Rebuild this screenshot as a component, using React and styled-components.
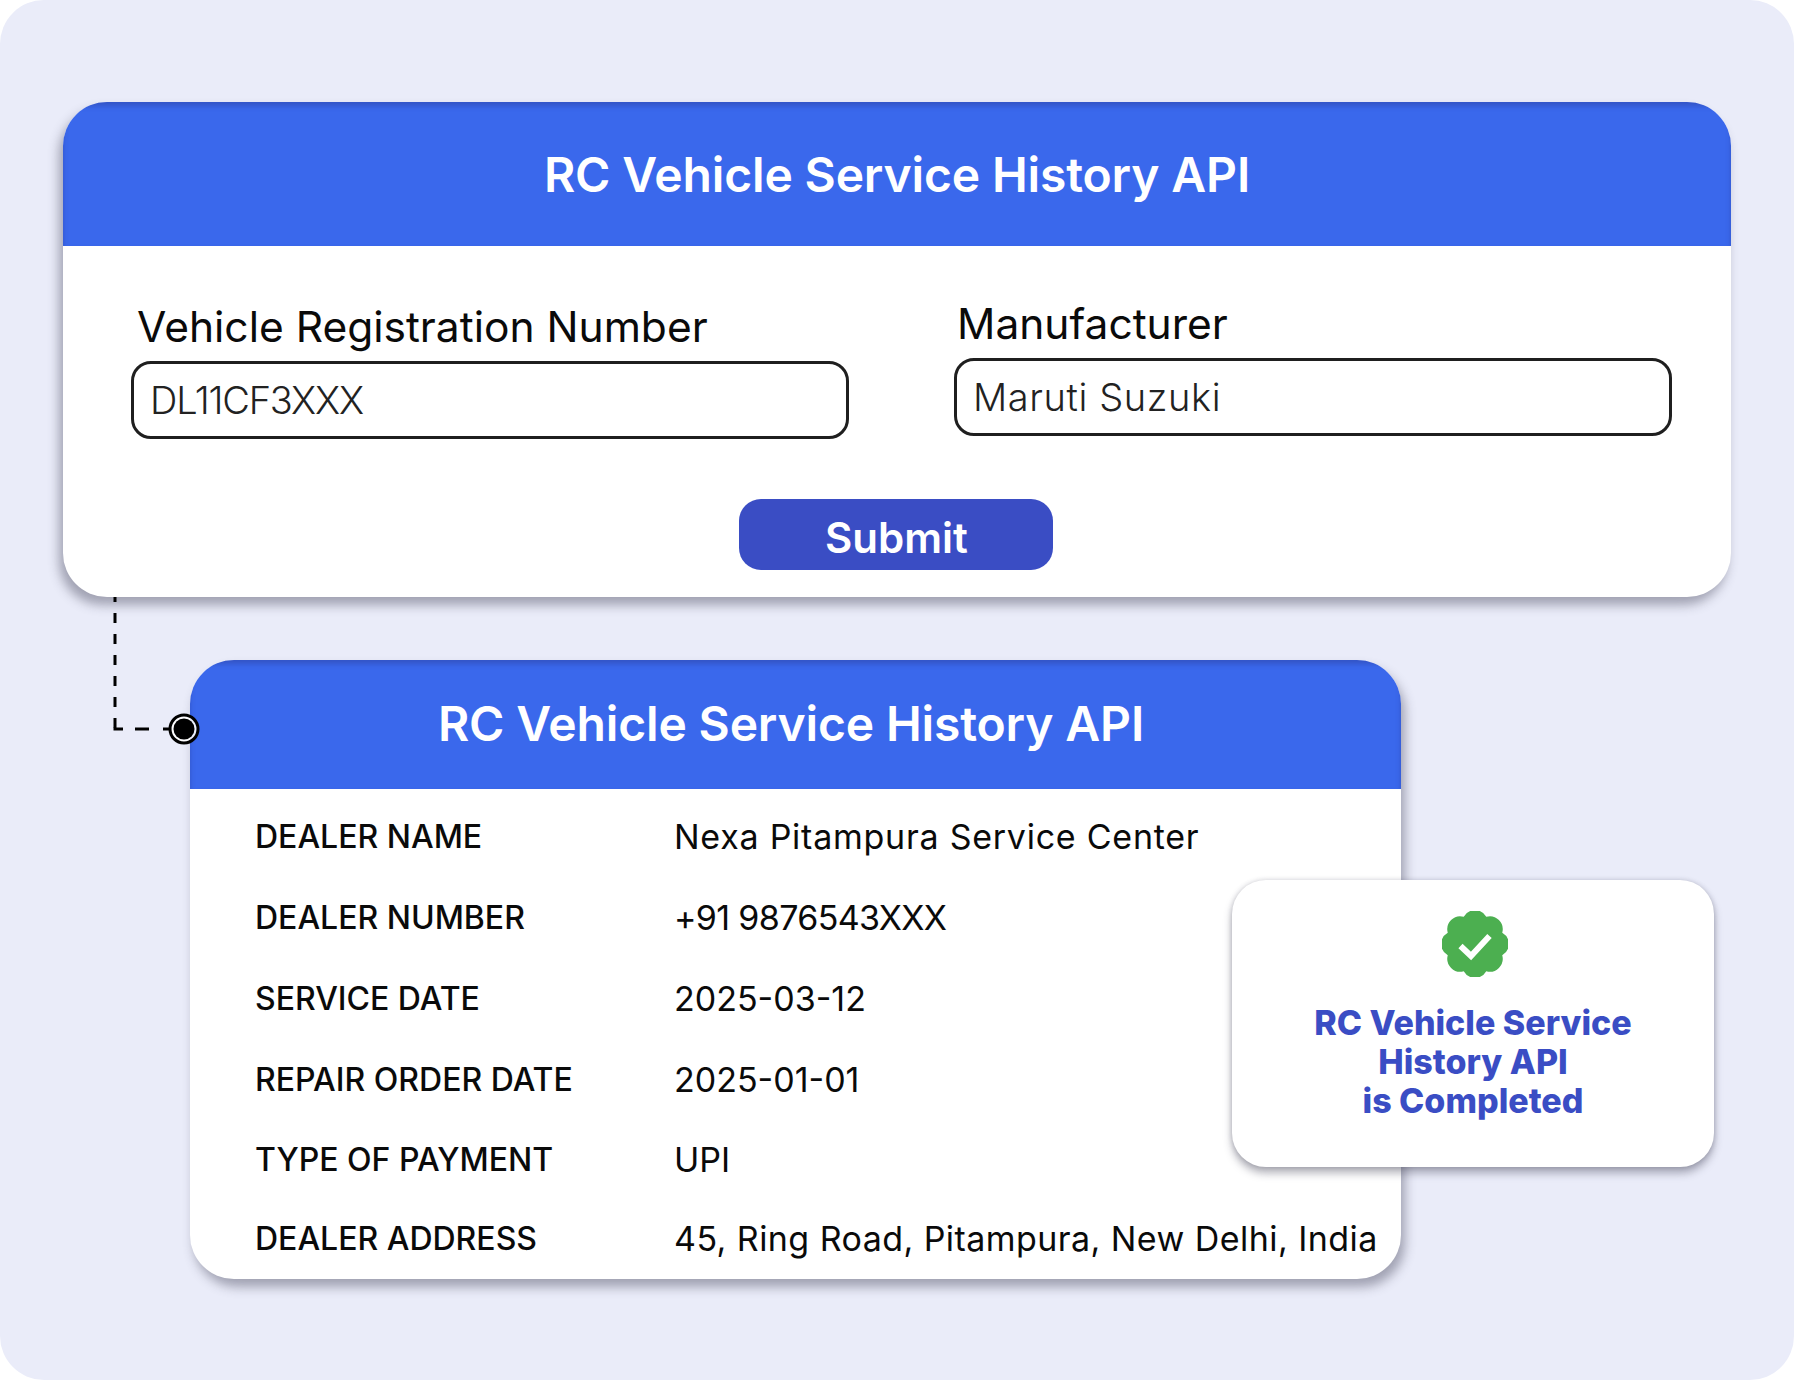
import React from 'react';
import styled, { createGlobalStyle } from 'styled-components';

const GlobalStyle = createGlobalStyle`
  html, body {
    margin: 0;
    padding: 0;
    background: #ffffff;
    font-family: Inter, "Liberation Sans", sans-serif;
  }
`;

const Page = styled.div`
  box-sizing: border-box;
  width: 1794px;
  height: 1380px;
  padding: 102px 63px 0;
  border-radius: 44px;
  background: #eaecf9;
`;

const Card = styled.section`
  border-radius: 44px;
  background: #ffffff;
  overflow: hidden;
`;

const FormCard = styled(Card)`
  height: 495px;
  box-shadow: -4px 8px 11px rgba(60, 60, 80, 0.42);
`;

const Header = styled.header`
  display: flex;
  align-items: center;
  justify-content: center;
  height: ${(p) => p.$height}px;
  padding-bottom: ${(p) => p.$nudge}px;
  padding-right: ${(p) => p.$shift}px;
  box-sizing: border-box;
  background: #3a68ec;
  box-shadow: inset 0 4px 5px rgba(40, 50, 130, 0.35);
  color: #ffffff;
  font-size: 48px;
  font-weight: 600;
  letter-spacing: -0.15px;
`;

const FormBody = styled.div`
  padding: 0 69px 0 68px;
`;

const Fields = styled.div`
  display: grid;
  grid-template-columns: 718px 718px;
  column-gap: 105px;
  align-items: start;
  height: 253px;
`;

const Field = styled.div`
  padding-top: ${(p) => p.$top}px;
`;

const Label = styled.div`
  margin-left: ${(p) => p.$indent}px;
  height: 59px;
  line-height: 50px;
  color: #0a0a0a;
  font-size: 42.5px;
  font-weight: 400;
`;

const Input = styled.div`
  box-sizing: border-box;
  height: 78px;
  padding-left: 16px;
  display: flex;
  align-items: center;
  border: 3px solid #1f1f1f;
  border-radius: 20px;
  color: #222222;
  font-size: 38px;
  font-weight: 300;
  letter-spacing: ${(p) => p.$spacing}px;
`;

const SubmitRow = styled.div`
  display: flex;
  justify-content: center;
  padding-right: 2px;
`;

const SubmitButton = styled.button`
  width: 314px;
  height: 71px;
  padding: 5px 0 0 2px;
  border: 0;
  border-radius: 22px;
  background: #3a4dc4;
  color: #ffffff;
  font-family: inherit;
  font-size: 42px;
  font-weight: 600;
`;

const ResultArea = styled.div`
  position: relative;
  width: 1211px;
  margin: 63px 0 0 127px;
`;

const ResultCard = styled(Card)`
  height: 619px;
  box-shadow: 4px 8px 11px rgba(60, 60, 80, 0.42);
`;

const Rows = styled.dl`
  display: grid;
  grid-template-columns: 419px 1fr;
  margin: 0;
  padding: 7px 0 0 65px;
`;

const Term = styled.dt`
  height: ${(p) => p.$height}px;
  display: flex;
  align-items: center;
  color: #0a0a0a;
  font-size: 32px;
  font-weight: 500;
`;

const Value = styled.dd`
  height: ${(p) => p.$height}px;
  margin: 0;
  display: flex;
  align-items: center;
  color: #0a0a0a;
  font-size: 34px;
  font-weight: 400;
  letter-spacing: ${(p) => p.$spacing}px;
  white-space: nowrap;
`;

const Connector = styled.svg`
  position: absolute;
  left: -90px;
  top: -65px;
  overflow: visible;
`;

const Toast = styled.aside`
  position: absolute;
  left: 1042px;
  top: 220px;
  box-sizing: border-box;
  width: 482px;
  height: 287px;
  padding-top: 31px;
  display: flex;
  flex-direction: column;
  align-items: center;
  border-radius: 34px;
  background: #ffffff;
  box-shadow: 0 6px 9px rgba(60, 60, 80, 0.4), 0 0 5px rgba(60, 60, 80, 0.22);
`;

const SealIcon = styled.svg`
  margin-left: 4px;
`;

const ToastText = styled.p`
  margin: 26px 0 0;
  color: #3a4dc4;
  font-size: 34px;
  font-weight: 800;
  line-height: 39px;
  text-align: center;
`;

const rows = [
  ['DEALER NAME', 'Nexa Pitampura Service Center', 81, 0.75],
  ['DEALER NUMBER', '+91 9876543XXX', 81, -0.65],
  ['SERVICE DATE', '2025-03-12', 81, 0],
  ['REPAIR ORDER DATE', '2025-01-01', 81, 0],
  ['TYPE OF PAYMENT', 'UPI', 78, 0],
  ['DEALER ADDRESS', '45, Ring Road, Pitampura, New Delhi, India', 81, 0.44],
];

// scalloped seal, a lobe at each of the 8 compass points
function sealPath() {
  const lobes = 8;
  const cx = 33;
  const cy = 33;
  const r = 29.5;
  const points = [];
  for (let i = 0; i < lobes; i++) {
    const a = ((i + 0.5) / lobes) * Math.PI * 2 - Math.PI / 2;
    points.push([cx + r * Math.cos(a), cy + r * Math.sin(a)]);
  }
  let d = `M${points[0][0].toFixed(2)} ${points[0][1].toFixed(2)}`;
  for (let i = 1; i <= lobes; i++) {
    const p = points[i % lobes];
    d += ` A13 13 0 0 1 ${p[0].toFixed(2)} ${p[1].toFixed(2)}`;
  }
  return d + 'Z';
}

function Seal() {
  return (
    <SealIcon width="66" height="66" viewBox="0 0 66 66">
      <path d={sealPath()} fill="#4caf50" />
      <path d="M18.5 35 L29 45 L47.5 25" fill="none" stroke="#ffffff" strokeWidth="6" />
    </SealIcon>
  );
}

export default function App() {
  return (
    <Page>
      <GlobalStyle />
      <FormCard>
        <Header $height={144} $nudge={0} $shift={0}>RC Vehicle Service History API</Header>
        <FormBody>
          <Fields>
            <Field $top={56}>
              <Label $indent={6}>Vehicle Registration Number</Label>
              <Input $spacing={-1.2}>DL11CF3XXX</Input>
            </Field>
            <Field $top={53}>
              <Label $indent={3}>Manufacturer</Label>
              <Input $spacing={0.6}>Maruti Suzuki</Input>
            </Field>
          </Fields>
          <SubmitRow>
            <SubmitButton>Submit</SubmitButton>
          </SubmitRow>
        </FormBody>
      </FormCard>

      <ResultArea>
        <ResultCard>
          <Header $height={129} $nudge={2} $shift={9}>RC Vehicle Service History API</Header>
          <Rows>
            {rows.map(([term, value, height, spacing]) => (
              <React.Fragment key={term}>
                <Term $height={height}>{term}</Term>
                <Value $height={height} $spacing={spacing}>{value}</Value>
              </React.Fragment>
            ))}
          </Rows>
        </ResultCard>

        <Connector width="110" height="140" viewBox="0 0 110 140">
          <path d="M15 2 V134" fill="none" stroke="#000000" strokeWidth="3" strokeDasharray="10 11" strokeDashoffset="5" />
          <path d="M13.5 134 H23 M35 134 H49 M63 134 H72" fill="none" stroke="#000000" strokeWidth="3" />
          <circle cx="84" cy="134" r="14" fill="#ffffff" fillOpacity="0.9" stroke="#000000" strokeWidth="3" />
          <circle cx="84" cy="134" r="10.5" fill="#000000" />
        </Connector>

        <Toast>
          <Seal />
          <ToastText>
            RC Vehicle Service
            <br />
            History API
            <br />
            is Completed
          </ToastText>
        </Toast>
      </ResultArea>
    </Page>
  );
}
